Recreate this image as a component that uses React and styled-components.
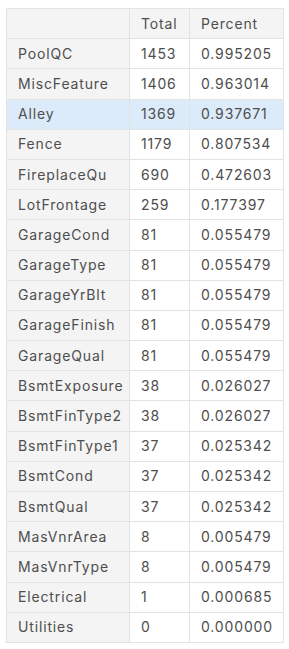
import React from "react";
import styled, { createGlobalStyle } from "styled-components";

const Global = createGlobalStyle`
  html, body { margin: 0; padding: 0; background: #ffffff; }
  body { font-family: Inter, "Noto Sans", sans-serif; }
`;

const Page = styled.div`
  padding: 8px 0 0 6px;
`;

const Table = styled.table`
  border-collapse: collapse;
  table-layout: fixed;
  width: 277px;
  font-family: Inter, "Noto Sans", sans-serif;
  font-size: 14px;
  letter-spacing: 0.85px;
  color: #4e4e4e;
  border: 1px solid #e3e3e3;
`;

const Cell = styled.td`
  height: 30.2px;
  padding: 0 10px 0 11px;
  line-height: 20px;
  text-align: left;
  white-space: nowrap;
  overflow: hidden;
  border: 1px solid #e3e3e3;
  background: ${(p) => (p.$active ? "#dcebf9" : p.$head ? "#f4f4f4" : "#ffffff")};
  font-weight: 400;
  box-sizing: border-box;
`;

const rows = [
  ["PoolQC", 1453, "0.995205"],
  ["MiscFeature", 1406, "0.963014"],
  ["Alley", 1369, "0.937671"],
  ["Fence", 1179, "0.807534"],
  ["FireplaceQu", 690, "0.472603"],
  ["LotFrontage", 259, "0.177397"],
  ["GarageCond", 81, "0.055479"],
  ["GarageType", 81, "0.055479"],
  ["GarageYrBlt", 81, "0.055479"],
  ["GarageFinish", 81, "0.055479"],
  ["GarageQual", 81, "0.055479"],
  ["BsmtExposure", 38, "0.026027"],
  ["BsmtFinType2", 38, "0.026027"],
  ["BsmtFinType1", 37, "0.025342"],
  ["BsmtCond", 37, "0.025342"],
  ["BsmtQual", 37, "0.025342"],
  ["MasVnrArea", 8, "0.005479"],
  ["MasVnrType", 8, "0.005479"],
  ["Electrical", 1, "0.000685"],
  ["Utilities", 0, "0.000000"],
];

export default function App() {
  return (
    <Page>
      <Global />
      <Table>
        <colgroup>
          <col style={{ width: 123 }} />
          <col style={{ width: 60 }} />
          <col style={{ width: 94 }} />
        </colgroup>
        <thead>
          <tr>
            <Cell as="th" $head />
            <Cell as="th" $head>Total</Cell>
            <Cell as="th" $head>Percent</Cell>
          </tr>
        </thead>
        <tbody>
          {rows.map(([name, total, pct]) => {
            const active = name === "Alley";
            return (
              <tr key={name}>
                <Cell as="th" $head={!active} $active={active}>{name}</Cell>
                <Cell $active={active}>{total}</Cell>
                <Cell $active={active}>{pct}</Cell>
              </tr>
            );
          })}
        </tbody>
      </Table>
    </Page>
  );
}
